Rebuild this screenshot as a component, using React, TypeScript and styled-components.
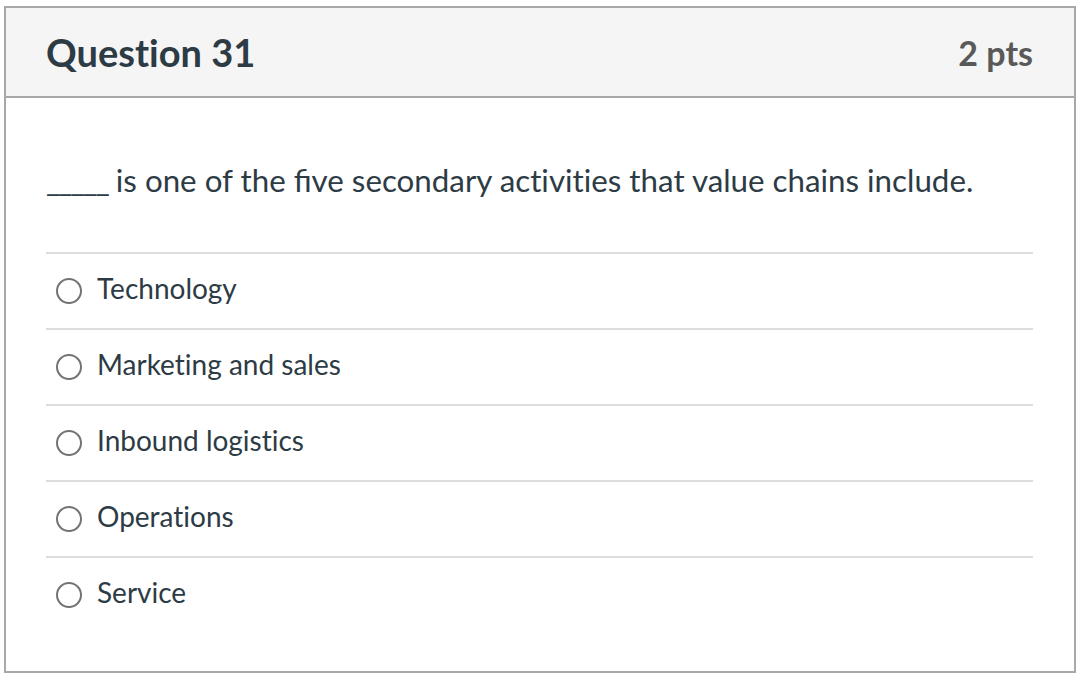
import React from 'react';
import styled, { createGlobalStyle } from 'styled-components';

const GlobalStyle = createGlobalStyle`
  html, body {
    margin: 0;
    padding: 0;
    background: #ffffff;
  }
  body {
    font-family: Lato, "Liberation Sans", sans-serif;
    color: #2d3b45;
    font-variant-ligatures: none;
  }
`;

const answers = [
  'Technology',
  'Marketing and sales',
  'Inbound logistics',
  'Operations',
  'Service',
];

const App = () => {
  return (
    <>
      <GlobalStyle />
      <Page>
        <Card>
          <Header>
            <Title>Question 31</Title>
            <Points>2 pts</Points>
          </Header>
          <Body>
            <QuestionText>
              <Blank>_____</Blank> is one of the <Lig>five</Lig> secondary activities that value chains include.
            </QuestionText>
            <AnswerList>
              {answers.map((answer) => (
                <AnswerRow key={answer}>
                  <Radio />
                  <AnswerLabel>{answer}</AnswerLabel>
                </AnswerRow>
              ))}
            </AnswerList>
          </Body>
        </Card>
      </Page>
    </>
  );
};

const Page = styled.div`
  padding: 6px 4px 0 4px;
`;

const Card = styled.div`
  border: 2px solid #a8a8a8;
  height: 667px;
  box-sizing: border-box;
  background: #ffffff;
`;

const Header = styled.div`
  display: flex;
  justify-content: space-between;
  align-items: center;
  height: 88px;
  padding: 0 41px 0 40px;
  background-color: #f5f5f5;
  border-bottom: 2px solid #a8a8a8;
`;

const Title = styled.h2`
  margin: 0;
  font-size: 38px;
  font-weight: 700;
  color: #2d3b45;
`;

const Points = styled.div`
  font-size: 34px;
  font-weight: 700;
  color: #595959;
`;

const Body = styled.div`
  padding: 60px 41px 0 40px;
`;

const QuestionText = styled.p`
  margin: 0 0 50px 0;
  font-size: 31.3px;
  line-height: 44px;
  color: #2d3b45;
`;

const Blank = styled.span`
  letter-spacing: -2px;
`;

const Lig = styled.span`
  font-variant-ligatures: common-ligatures;
`;

const AnswerList = styled.div`
  display: flex;
  flex-direction: column;
`;

const AnswerRow = styled.label`
  display: flex;
  align-items: center;
  height: 74px;
  box-sizing: content-box;
  gap: 15px;
  padding-left: 10px;
  border-top: 2px solid #dddddd;
`;

const Radio = styled.span`
  width: 26px;
  height: 26px;
  border-radius: 50%;
  border: 2px solid #737373;
  box-sizing: border-box;
  flex-shrink: 0;
`;

const AnswerLabel = styled.span`
  font-size: 28px;
  line-height: 34px;
  margin-bottom: 6px;
  color: #2d3b45;
`;

export default App;
